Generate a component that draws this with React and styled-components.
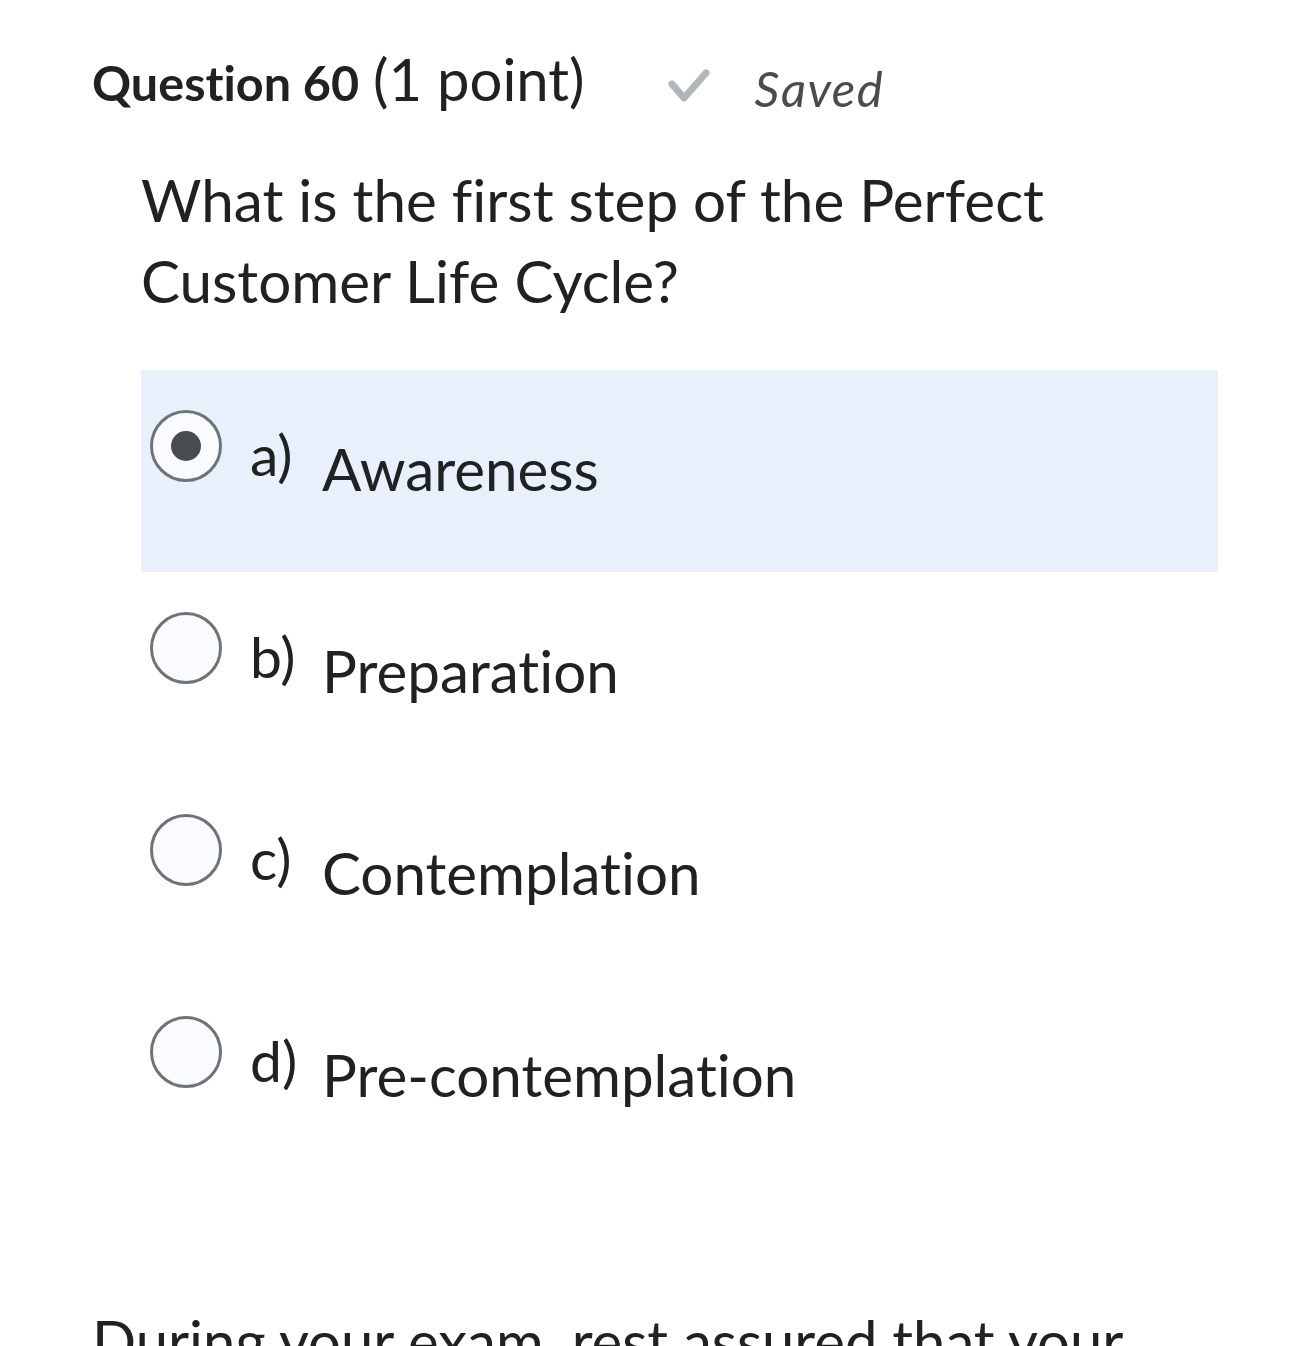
import React from "react";
import styled, { createGlobalStyle } from "styled-components";

const Global = createGlobalStyle`
  html, body { margin: 0; padding: 0; background: #ffffff; }
  body {
    font-family: Lato, "Open Sans", sans-serif;
    color: #202122;
    overflow: hidden;
    font-variant-ligatures: none;
    font-feature-settings: "liga" 0;
  }
`;

const Page = styled.div`
  width: 1290px;
  height: 1346px;
  overflow: hidden;
  box-sizing: border-box;
  padding: 44px 72px 0 92px;
`;

const Header = styled.div`
  display: flex;
  align-items: baseline;
  height: 80px;
`;

const QTitle = styled.h2`
  margin: 0;
  font-size: 48.5px;
  font-weight: 700;
  color: #202122;
`;

const Points = styled.span`
  font-size: 58px;
  font-weight: 400;
  margin-left: 14px;
  color: #202122;
`;

const SavedWrap = styled.span`
  display: inline-flex;
  align-items: center;
  margin-left: 81px;
  gap: 43px;
  font-size: 49px;
  letter-spacing: 1.5px;
  font-style: italic;
  color: #494c4e;
  transform: translateY(2px);
`;

const Check = styled.svg`
  width: 46px;
  height: 34px;
  flex-shrink: 0;
  margin-top: -4px;
`;

const Body = styled.div`
  padding-left: 49px;
`;

const QText = styled.p`
  margin: 35px 0 0;
  font-size: 58.4px;
  line-height: 81px;
  color: #202122;
  max-width: 1000px;
`;

const Options = styled.div`
  margin-top: 49px;
  display: flex;
  flex-direction: column;
`;

const Option = styled.label`
  display: flex;
  align-items: flex-start;
  height: 202px;
  box-sizing: border-box;
  padding: 40px 0 0 9px;
  background: ${(p) => (p.$selected ? "#e8f0fb" : "transparent")};
`;

const Radio = styled.span`
  width: 72px;
  height: 72px;
  box-sizing: border-box;
  border-radius: 50%;
  border: 3px solid #6e7376;
  background: #f9fbff;
  display: flex;
  align-items: center;
  justify-content: center;
  flex-shrink: 0;
  &::after {
    content: "";
    width: 30px;
    height: 30px;
    border-radius: 50%;
    background: #494c4e;
    display: ${(p) => (p.$checked ? "block" : "none")};
  }
`;

const Letter = styled.span`
  font-size: 57px;
  line-height: 57px;
  margin-left: 28px;
  margin-top: 16px;
  width: 72px;
  flex-shrink: 0;
  color: #202122;
`;

const AnswerText = styled.span`
  font-size: 58.3px;
  line-height: 58px;
  margin-top: 29px;
  color: #202122;
`;

const Footer = styled.p`
  margin: 122px 0 0;
  font-size: 58px;
  line-height: 81px;
  color: #202122;
`;

const options = [
  { key: "a)", text: "Awareness", checked: true },
  { key: "b)", text: "Preparation" },
  { key: "c)", text: "Contemplation" },
  { key: "d)", text: "Pre-contemplation" },
];

export default function App() {
  return (
    <Page>
      <Global />
      <Header>
        <QTitle>Question 60</QTitle>
        <Points>(1 point)</Points>
        <SavedWrap>
          <Check viewBox="0 0 46 34" fill="none">
            <path d="M6 15 L18 29 L40 4" stroke="#b1b6ba" strokeWidth="7" strokeLinecap="round" strokeLinejoin="round" />
          </Check>
          Saved
        </SavedWrap>
      </Header>
      <Body>
        <QText>What is the first step of the Perfect Customer Life Cycle?</QText>
        <Options>
          {options.map((o) => (
            <Option key={o.key} $selected={o.checked}>
              <Radio $checked={o.checked} />
              <Letter>{o.key}</Letter>
              <AnswerText>{o.text}</AnswerText>
            </Option>
          ))}
        </Options>
      </Body>
      <Footer>During your exam, rest assured that your answers are saved.</Footer>
    </Page>
  );
}
